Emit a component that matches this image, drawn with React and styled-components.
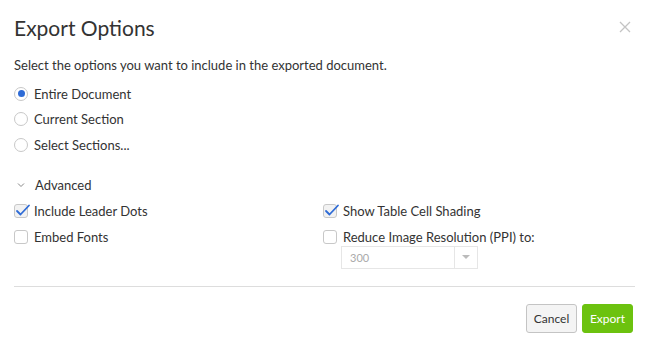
import React, { useState } from 'react';
import styled, { createGlobalStyle } from 'styled-components';

const GlobalStyle = createGlobalStyle`
  html, body {
    margin: 0;
    padding: 0;
    background: #fff;
  }
  body {
    font-family: Lato, "Noto Sans", sans-serif;
    color: #333;
  }
`;

const Dialog = styled.div`
  width: 649px;
  height: 348px;
  box-sizing: border-box;
  padding: 0 14px;
  display: flex;
  flex-direction: column;
`;

const Header = styled.div`
  height: 54px;
  display: flex;
  align-items: center;
  justify-content: space-between;
`;

const Title = styled.h1`
  margin: 0;
  font-size: 21px;
  font-weight: 400;
  color: #333;
`;

const Close = styled.button`
  border: 0;
  background: none;
  padding: 0;
  margin-right: 4px;
  width: 12px;
  height: 12px;
  display: flex;
  cursor: pointer;
`;

const Intro = styled.p`
  margin: 0;
  font-size: 13px;
  line-height: 22px;
`;

const List = styled.div`
  display: flex;
  flex-direction: column;
  margin-top: 5px;
`;

const Option = styled.label`
  display: flex;
  align-items: center;
  gap: 6px;
  height: 25.5px;
  font-size: 13px;
  cursor: pointer;
`;

const RadioDot = styled.span`
  width: 12px;
  height: 12px;
  border-radius: 50%;
  border: 1px solid #c8c8c8;
  background: #fff;
  display: flex;
  align-items: center;
  justify-content: center;
  flex-shrink: 0;
  &::after {
    content: '';
    width: 7px;
    height: 7px;
    border-radius: 50%;
    background: ${(p) => (p.$on ? '#2e6bd6' : 'transparent')};
  }
`;

const Box = styled.span`
  width: 14px;
  height: 14px;
  box-sizing: border-box;
  border: 1px solid #c8c8c8;
  border-radius: 3px;
  background: ${(p) => (p.$on ? '#f2f2f2' : '#fff')};
  position: relative;
  flex-shrink: 0;
  svg {
    position: absolute;
    left: 0;
    top: -2px;
  }
`;

const Toggle = styled.div`
  display: flex;
  align-items: center;
  gap: 10px;
  height: 25px;
  margin-top: 15px;
  font-size: 13px;
  padding-left: 3px;
  cursor: pointer;
`;

const Grid = styled.div`
  display: grid;
  grid-template-columns: 309px 1fr;
  margin-top: 1px;
`;

const Column = styled.div`
  display: flex;
  flex-direction: column;
`;

const Select = styled.div`
  margin-left: 18px;
  margin-top: -4px;
  width: 137px;
  height: 23px;
  box-sizing: border-box;
  border: 1px solid #e6e6e6;
  display: flex;
  align-items: stretch;
  font-size: 11px;
  color: #aaa;
`;

const SelectValue = styled.span`
  flex: 1;
  display: flex;
  align-items: center;
  padding-left: 8px;
`;

const SelectArrow = styled.span`
  width: 22px;
  border-left: 1px solid #e6e6e6;
  display: flex;
  align-items: center;
  justify-content: center;
  &::after {
    content: '';
    border-left: 4px solid transparent;
    border-right: 4px solid transparent;
    border-top: 4px solid #bbb;
  }
`;

const Divider = styled.hr`
  margin: 17px 0 0;
  border: 0;
  border-top: 1px solid #ddd;
`;

const Footer = styled.div`
  display: flex;
  justify-content: flex-end;
  gap: 5px;
  padding-top: 17px;
  padding-right: 2px;
`;

const Button = styled.button`
  height: 29px;
  width: 51px;
  padding: 0;
  font-family: inherit;
  font-size: 12px;
  border-radius: 3px;
  cursor: pointer;
  border: 1px solid ${(p) => (p.$primary ? '#6cc20f' : '#c4c4c4')};
  background: ${(p) => (p.$primary ? '#6cc20f' : '#f4f4f4')};
  color: ${(p) => (p.$primary ? '#fff' : '#333')};
`;

const Check = () => (
  <svg width="16" height="14" viewBox="0 0 16 14">
    <path d="M2 8 L5.5 11.5 L14 2.5" fill="none" stroke="#2e6bd6" strokeWidth="1.8" strokeLinecap="round" strokeLinejoin="round" />
  </svg>
);

const Chevron = () => (
  <svg width="8" height="6" viewBox="0 0 8 6">
    <path d="M1 1.5 L4 4.5 L7 1.5" fill="none" stroke="#888" strokeWidth="1" />
  </svg>
);

const Radio = ({ on, label, onClick }) => (
  <Option onClick={onClick}>
    <RadioDot $on={on} />
    {label}
  </Option>
);

const CheckItem = ({ on, label, onClick }) => (
  <Option onClick={onClick}>
    <Box $on={on}>{on && <Check />}</Box>
    {label}
  </Option>
);

export default function App() {
  const [scope, setScope] = useState(0);
  const [flags, setFlags] = useState({ dots: true, fonts: false, shading: true, reduce: false });
  const flip = (k) => setFlags((f) => ({ ...f, [k]: !f[k] }));

  return (
    <>
      <GlobalStyle />
      <Dialog>
        <Header>
          <Title>Export Options</Title>
          <Close aria-label="Close">
            <svg width="12" height="12" viewBox="0 0 12 12">
              <path d="M1 1 L11 11 M11 1 L1 11" stroke="#c4c4c4" strokeWidth="1.3" />
            </svg>
          </Close>
        </Header>
        <Intro>Select the options you want to include in the exported document.</Intro>
        <List>
          {['Entire Document', 'Current Section', 'Select Sections...'].map((l, i) => (
            <Radio key={l} label={l} on={scope === i} onClick={() => setScope(i)} />
          ))}
        </List>
        <Toggle>
          <Chevron />
          Advanced
        </Toggle>
        <Grid>
          <Column>
            <CheckItem label="Include Leader Dots" on={flags.dots} onClick={() => flip('dots')} />
            <CheckItem label="Embed Fonts" on={flags.fonts} onClick={() => flip('fonts')} />
          </Column>
          <Column>
            <CheckItem label="Show Table Cell Shading" on={flags.shading} onClick={() => flip('shading')} />
            <CheckItem label="Reduce Image Resolution (PPI) to:" on={flags.reduce} onClick={() => flip('reduce')} />
            <Select>
              <SelectValue>300</SelectValue>
              <SelectArrow />
            </Select>
          </Column>
        </Grid>
        <Divider />
        <Footer>
          <Button>Cancel</Button>
          <Button $primary>Export</Button>
        </Footer>
      </Dialog>
    </>
  );
}
